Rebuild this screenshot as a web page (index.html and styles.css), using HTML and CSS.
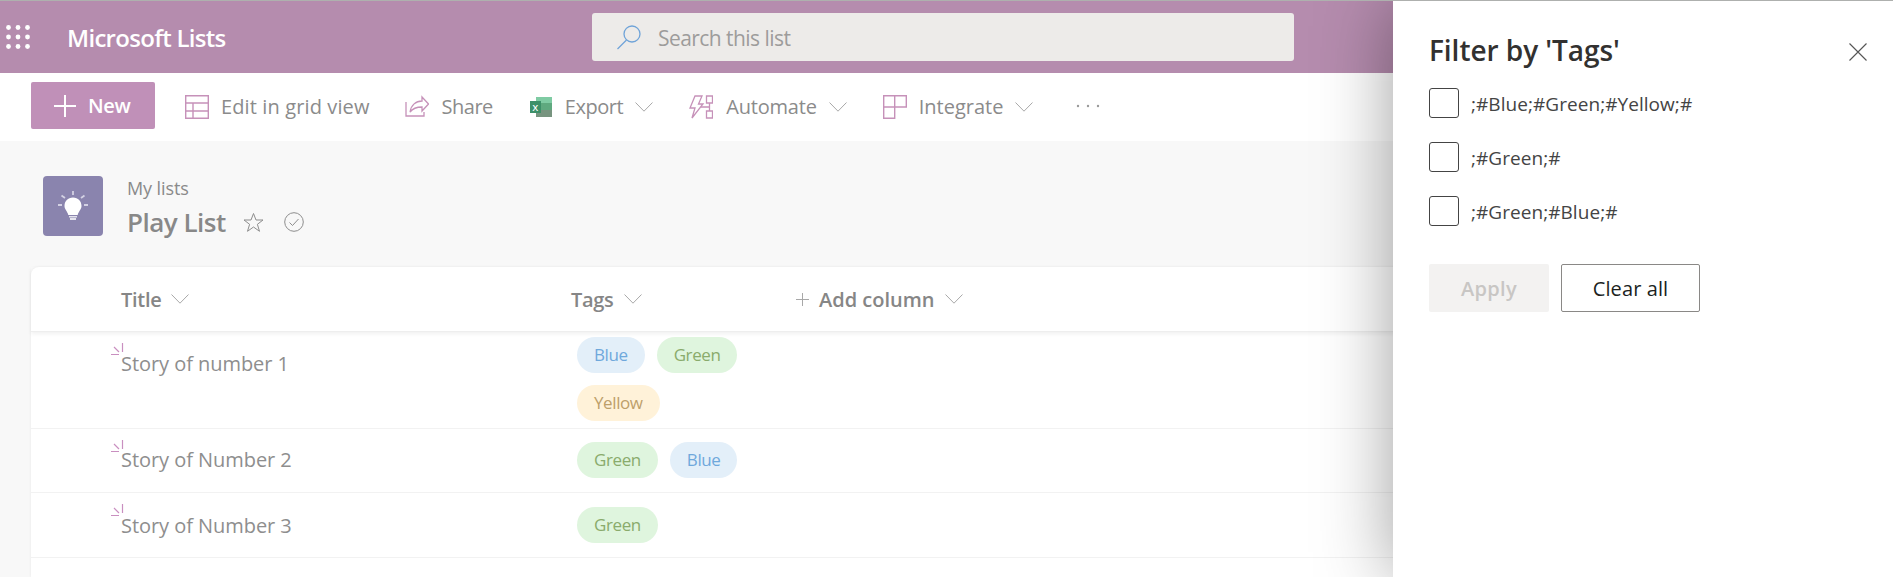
FILE: index.html
```html
<!DOCTYPE html>
<html lang="en">
<head>
<meta charset="utf-8">
<title>Microsoft Lists</title>
<link rel="stylesheet" href="styles.css">
</head>
<body>
<div class="app">
  <header class="suite">
    <svg class="waffle" width="24" height="24" viewBox="0 0 24 24"><g fill="#fff"><circle cx="2.5" cy="2.5" r="2.4"/><circle cx="12" cy="2.5" r="2.4"/><circle cx="21.500" cy="2.5" r="2.4"/><circle cx="2.5" cy="12" r="2.4"/><circle cx="12" cy="12" r="2.4"/><circle cx="21.500" cy="12" r="2.4"/><circle cx="2.5" cy="21.500" r="2.4"/><circle cx="12" cy="21.500" r="2.4"/><circle cx="21.500" cy="21.500" r="2.4"/></g></svg>
    <span class="brand">Microsoft Lists</span>
    <div class="search">
      <svg class="search-icon" width="26" height="26" viewBox="0 0 26 26" fill="none" stroke="#6fa3d8" stroke-width="1.3"><circle cx="16" cy="10" r="8"/><path d="M10.5 16 1.5 25"/></svg>
      <span class="search-text">Search this list</span>
    </div>
  </header>

  <nav class="toolbar">
    <button class="new-btn" type="button">
      <svg width="22" height="22" viewBox="0 0 22 22" stroke="#fff" stroke-width="2"><path d="M11 0v22M0 11h22"/></svg>
      <span>New</span>
    </button>
    <div class="tool tool-grid">
      <svg width="24" height="24" viewBox="0 0 24 24" fill="none" stroke="#c691b9" stroke-width="1.4"><path d="M.7.7h22.6v22.6H.7zM.7 8h22.6M.7 16h22.6M8 8v15.3"/></svg>
      <span class="tool-label w-grid">Edit in grid view</span>
    </div>
    <div class="tool tool-share">
      <svg width="24" height="24" viewBox="0 0 24 24" fill="none" stroke="#c691b9" stroke-width="1.3"><path d="M1 7v14h18v-4"/><path d="M17 2l6.500 7-6.500 7v-4c-5 0-9 1-12 5 1-7 6-11 12-11z"/></svg>
      <span class="tool-label w-share">Share</span>
    </div>
    <div class="tool tool-export">
      <svg width="22" height="24" viewBox="0 0 22 24"><path fill="#7fcba3" d="M6 2h16v6H6z"/><path fill="#5fa97f" d="M6 8h16v7H6z"/><path fill="#77947f" d="M6 15h16v7H6z"/><path fill="#3d9069" d="M0 6h11v12H0z"/><text class="xl" x="2.6" y="15.5">X</text></svg>
      <span class="tool-label w-export">Export</span>
      <svg class="chev" width="18" height="10" viewBox="0 0 18 10" fill="none" stroke="#a8a8a8" stroke-width="1"><path d="M.5.5 9 9.2 17.5.5"/></svg>
    </div>
    <div class="tool tool-auto">
      <svg width="24" height="24" viewBox="0 0 24 24" fill="none" stroke="#c691b9" stroke-width="1.3"><path d="M6 1h7L9.500 9H14L3 23l3-10H1z"/><path d="M17.500 1h6v7h-6zM17.500 16h6v7h-6zM20.500 8v8M12 12h8.500"/></svg>
      <span class="tool-label w-auto">Automate</span>
      <svg class="chev" width="18" height="10" viewBox="0 0 18 10" fill="none" stroke="#a8a8a8" stroke-width="1"><path d="M.5.5 9 9.2 17.500.5"/></svg>
    </div>
    <div class="tool tool-int">
      <svg width="24" height="24" viewBox="0 0 24 24" fill="none" stroke="#c691b9" stroke-width="1.4"><path d="M.7.7h22.600v11.300H11.700v11.300H.7zM.7 12h11M11.700.7V12"/></svg>
      <span class="tool-label w-int">Integrate</span>
      <svg class="chev" width="18" height="10" viewBox="0 0 18 10" fill="none" stroke="#a8a8a8" stroke-width="1"><path d="M.5.5 9 9.2 17.500.5"/></svg>
    </div>
    <svg class="more" width="24" height="4" viewBox="0 0 24 4" fill="#9a9a9a"><circle cx="2" cy="2" r="1.200"/><circle cx="12" cy="2" r="1.200"/><circle cx="22" cy="2" r="1.200"/></svg>
  </nav>

  <main class="content">
    <section class="list-head">
      <div class="list-icon">
        <svg width="32" height="32" viewBox="0 0 32 32" fill="none" stroke="#d3d1e3" stroke-width="1.800"><path d="M16 1v4M4.500 5.500 8 8M27.500 5.500 24 8M1 15h4M27 15h4"/><path fill="#fff" stroke="none" d="M16 7.500c-5.200 0-8.500 3.600-8.500 8.500 0 3.500 2.800 5 3.800 9h9.400c1-4 3.800-5.500 3.800-9 0-4.900-3.300-8.500-8.500-8.500z"/><path fill="#e4e3ee" stroke="none" d="M12 26h8v1.500h-8zM13 28h6v2h-6z"/></svg>
      </div>
      <div class="list-titles">
        <div class="crumb">My lists</div>
        <div class="title-row">
          <span class="list-name">Play List</span>
          <svg class="star" width="21" height="21" viewBox="0 0 21 21" fill="none" stroke="#8d8d8d" stroke-width="1"><path d="M10.500 1.500 13 8h7l-5.600 4.300 2.100 7-6-4.300-6 4.300 2.100-7L1 8h7z"/></svg>
          <svg class="check" width="20" height="20" viewBox="0 0 20 20" fill="none" stroke="#8d8d8d" stroke-width="1"><circle cx="10" cy="10" r="9.300"/><path d="m5.500 10.500 3 3 6-6.500"/></svg>
        </div>
      </div>
    </section>

    <section class="card">
      <div class="row head-row">
        <div class="col-title head-cell"><span class="w-title">Title</span><svg class="chev" width="18" height="10" viewBox="0 0 18 10" fill="none" stroke="#a8a8a8" stroke-width="1"><path d="M.5.5 9 9.200 17.500.5"/></svg></div>
        <div class="col-tags head-cell"><span class="w-tags">Tags</span><svg class="chev" width="18" height="10" viewBox="0 0 18 10" fill="none" stroke="#a8a8a8" stroke-width="1"><path d="M.5.5 9 9.200 17.500.5"/></svg></div>
        <div class="head-cell">
          <svg class="plus" width="13" height="13" viewBox="0 0 13 13" stroke="#a8a8a8" stroke-width="1"><path d="M6.500 0v13M0 6.500h13"/></svg>
          <span class="w-add">Add column</span><svg class="chev" width="18" height="10" viewBox="0 0 18 10" fill="none" stroke="#a8a8a8" stroke-width="1"><path d="M.5.5 9 9.200 17.500.5"/></svg>
        </div>
      </div>

      <div class="row item-row row-one">
        <div class="col-title cell-title">
          <svg class="spark" width="13" height="13" viewBox="0 0 13 13" stroke="#c98fc0" stroke-width="1.200" fill="none"><path d="M11.500 0v9M3 4l5 5M0 11.500h8"/></svg>
          <span>Story of number 1</span>
        </div>
        <div class="col-tags tags">
          <span class="tag blue">Blue</span><span class="tag green">Green</span><span class="tag yellow">Yellow</span>
        </div>
      </div>
      <div class="row item-row row-two">
        <div class="col-title cell-title">
          <svg class="spark" width="13" height="13" viewBox="0 0 13 13" stroke="#c98fc0" stroke-width="1.200" fill="none"><path d="M11.500 0v9M3 4l5 5M0 11.500h8"/></svg>
          <span>Story of Number 2</span>
        </div>
        <div class="col-tags tags">
          <span class="tag green">Green</span><span class="tag blue">Blue</span>
        </div>
      </div>
      <div class="row item-row row-three">
        <div class="col-title cell-title">
          <svg class="spark" width="13" height="13" viewBox="0 0 13 13" stroke="#c98fc0" stroke-width="1.200" fill="none"><path d="M11.500 0v9M3 4l5 5M0 11.500h8"/></svg>
          <span>Story of Number 3</span>
        </div>
        <div class="col-tags tags">
          <span class="tag green">Green</span>
        </div>
      </div>
    </section>
  </main>

  <aside class="panel">
    <div class="panel-head">
      <h2 class="panel-title">Filter by 'Tags'</h2>
      <svg class="close" width="18" height="18" viewBox="0 0 18 18" stroke="#555" stroke-width="1.100"><path d="M.5.500l17 17M17.500.500l-17 17"/></svg>
    </div>
    <div class="options">
      <label class="option"><span class="box"></span><span class="opt-text">;#Blue;#Green;#Yellow;#</span></label>
      <label class="option"><span class="box"></span><span class="opt-text">;#Green;#</span></label>
      <label class="option"><span class="box"></span><span class="opt-text">;#Green;#Blue;#</span></label>
    </div>
    <div class="actions">
      <button class="btn apply" type="button">Apply</button>
      <button class="btn clear" type="button">Clear all</button>
    </div>
  </aside>
</div>
</body>
</html>
```
FILE: styles.css
```css
* { box-sizing: border-box; }
html, body { margin: 0; height: 100%; overflow: hidden; }
body { font-family: "Open Sans", "Noto Sans", sans-serif; background: #f8f8f8; border-top: 1px solid #aeb0ae; }
.app { position: relative; height: 576px; overflow: hidden; display: flex; flex-direction: column; }

.suite { height: 72px; flex: none; background: #b58cae; display: flex; align-items: center; padding-left: 6px; }
.waffle { flex: none; }
.brand { margin-left: 37px; width: 201px; color: #fff; font-size: 24px; font-weight: 600; letter-spacing: -.7px; white-space: nowrap; }
.search { margin-left: 324px; width: 702px; height: 48px; background: #edebe9; border-radius: 3px; display: flex; align-items: center; padding-left: 24px; }
.search-text { margin-left: 16px; margin-top: 2px; color: #9d9c9b; font-size: 21px; letter-spacing: -.55px; }

.toolbar { height: 68px; flex: none; background: #fff; display: flex; align-items: center; padding-left: 31px; color: #8b8b8b; font-size: 20px; padding-bottom: 3px; }
.new-btn { width: 124px; height: 47px; border: 0; border-radius: 2px; background: #c090b8; color: #fff; font: 600 20px "Open Sans", sans-serif; letter-spacing: -.3px; display: flex; align-items: center; padding: 0 0 0 23px; gap: 12px; }
.tool { display: flex; align-items: center; margin-top: 2px; }
.tool-label { margin-left: 12px; white-space: nowrap; }
.w-grid { letter-spacing: .12px; }
.w-share { margin-left: 13px; letter-spacing: -.5px; }
.w-export { margin-left: 13px; letter-spacing: -.45px; }
.w-auto { margin-left: 13px; letter-spacing: -.2px; }
.tool .chev { margin-left: 12px; }
.tool-grid { margin-left: 30px; }
.tool-share { margin-left: 35px; }
.tool-export { margin-left: 37px; }
.tool-auto { margin-left: 36px; }
.tool-int { margin-left: 36px; }
.more { margin-left: 43px; }
.xl { font-size: 9px; fill: #fff; font-weight: 600; }

.content { flex: 1; min-height: 0; display: flex; flex-direction: column; padding-left: 31px; }
.list-head { height: 126px; flex: none; display: flex; padding: 35px 0 0 12px; color: #8a8a8a; }
.list-icon { width: 60px; height: 60px; border-radius: 4px; background: #8a84ae; display: flex; align-items: center; justify-content: center; }
.list-titles { margin-left: 24px; }
.crumb { font-size: 18px; line-height: 22px; margin-top: 1px; letter-spacing: -.1px; }
.title-row { display: flex; align-items: center; margin-top: 6px; }
.list-name { font-size: 26px; font-weight: 600; line-height: 34px; letter-spacing: -.5px; color: #888; }
.star { margin-left: 17px; }
.check { margin-left: 20px; }

.card { flex: 1; background: #fff; border-radius: 8px 8px 0 0; box-shadow: 0 0 3px rgba(0,0,0,.07); }
.row { display: flex; padding-left: 90px; }
.col-title { width: 450px; flex: none; }
.col-tags { width: 225px; flex: none; }
.head-row { height: 65px; align-items: center; color: #868686; font-size: 20px; font-weight: 600; border-bottom: 1px solid #eee; box-shadow: 0 2px 4px rgba(0,0,0,.06); letter-spacing: -.3px; }
.w-add { letter-spacing: 0; }
.head-cell { display: flex; align-items: center; }
.head-cell .chev { margin-left: 10px; }
.plus { margin-right: 10px; }

.item-row { border-bottom: 1px solid #f2f2f2; color: #8e8e8e; font-size: 20px; font-weight: 400; }
.row-one { height: 97px; }
.row-two { height: 64px; }
.row-three { height: 65px; }
.cell-title { position: relative; letter-spacing: -.05px; line-height: 30px; }
.row-one .cell-title { padding-top: 17px; }
.row-two .cell-title { padding-top: 16px; }
.row-three .cell-title { padding-top: 18px; }
.spark { position: absolute; left: -10px; top: 11px; }
.tags { display: flex; flex-wrap: wrap; gap: 12px; padding-left: 6px; align-content: flex-start; }
.row-one .tags { padding-top: 5px; }
.row-two .tags { padding-top: 13px; }
.row-three .tags { padding-top: 14px; }
.tag { height: 36px; line-height: 35px; border-radius: 18px; padding: 0 17px; font-size: 17px; letter-spacing: -.4px; white-space: nowrap; }
.blue { background: #e3eff9; color: #6fa8dc; }
.green { background: #dff5de; color: #8aab6c; }
.yellow { background: #fff2d9; color: #bd9f6a; }

.panel { position: absolute; top: 0; right: 0; bottom: 0; width: 500px; background: #fff; box-shadow: 0 0 70px rgba(0,0,0,.38); padding: 0 26px 0 36px; color: #323130; }
.panel-head { height: 87px; display: flex; justify-content: space-between; align-items: flex-start; padding-top: 31px; }
.panel-title { margin: 0; font-size: 28px; font-weight: 600; line-height: 36px; letter-spacing: -.05px; }
.close { margin-top: 11px; }
.options { display: flex; flex-direction: column; gap: 24px; }
.option { display: flex; align-items: center; height: 30px; }
.box { width: 30px; height: 30px; border: 1px solid #444; border-radius: 3px; background: #fff; }
.opt-text { margin-left: 12px; margin-top: 2px; font-size: 19px; letter-spacing: .05px; color: #444; }
.actions { display: flex; gap: 12px; margin-top: 38px; }
.btn { height: 48px; border-radius: 2px; font: 500 20px "Open Sans", sans-serif; letter-spacing: .1px; padding: 0; }
.apply { width: 120px; border: 0; background: #f3f2f1; color: #c8c6c4; letter-spacing: .3px; font-weight: 600; }
.clear { width: 139px; border: 1px solid #8a8886; background: #fff; color: #201f1e; }
```
